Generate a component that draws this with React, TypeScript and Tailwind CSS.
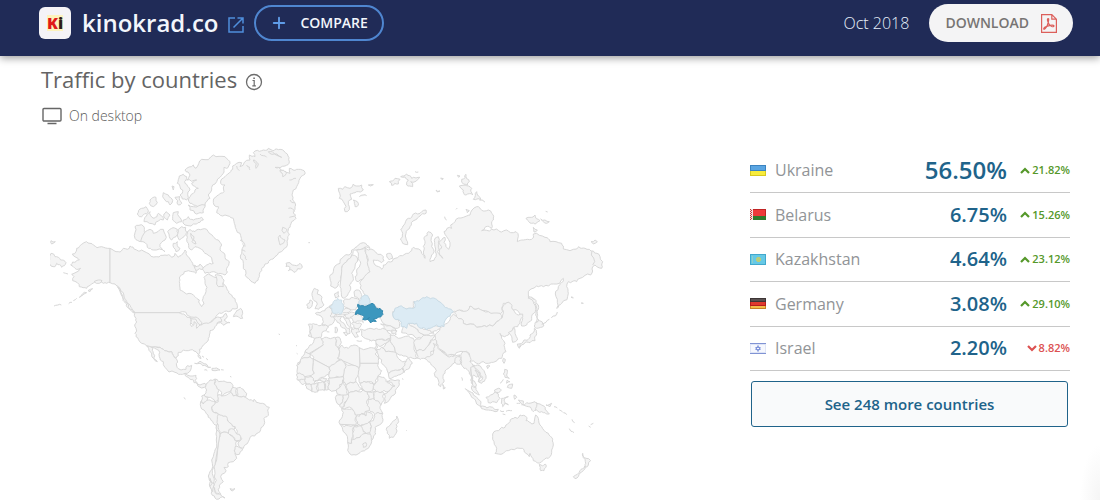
import { Plus } from "lucide-react";

type Point = [number, number];

type Region = {
  name: string;
  origin: Point;
  shapes: string[];
};

const regions: Region[] = [
  {
    name: "Canada and Alaska",
    origin: [120, 420],
    shapes: [
      "210 325 185 320 160 315 140 305 125 313 110 325 108 335 97 342 108 352 118 360 98 366 92 375 105 385 122 385 108 397 95 403 102 410 98 422 112 428 118 440 140 445 155 432 165 425 175 425 190 430 210 428",
      "210 325 235 335 250 325 262 328 270 318 285 328 305 330 320 338 350 350 375 345 395 352 405 340 415 352 430 340 435 330 445 350 455 365 470 380 468 400 445 392 425 405 418 425 420 450 440 462 465 470 478 480 485 500 492 492 490 470 498 455 495 430 492 412 505 402 520 410 540 415 550 430 562 450 575 465 590 490 592 505 565 515 545 520 525 535 512 548 538 533 558 520 562 530 552 540 570 548 552 556 542 548 528 552 510 565 482 570 462 560 452 530 417 518 285 518 275 505 262 490 252 468 240 445 225 432 210 428",
      "285 518 270 508 260 492 250 475 240 455 232 440 245 462 258 485",
      "590 512 602 505 608 520 608 535 595 530 580 530",
      "435 90 460 75 468 85 485 58 520 45 555 50 570 70 560 85 552 82 550 100 530 125 515 150 505 165 510 175 495 195 480 210 460 195 445 180 460 160 475 145 455 130 470 120 440 120 450 105",
      "412 130 418 108 430 103 440 110 435 130 450 150 440 180 420 165 428 150",
      "495 195 490 218 470 222 450 210 445 195 460 200",
      "430 240 445 230 460 240 485 232 490 240 470 252 435 255",
      "405 172 420 170 425 190 415 195",
      "370 158 385 165 398 182 390 195 375 180",
      "330 180 348 172 352 188 340 200 328 190",
      "292 222 305 205 318 200 325 212 310 225 298 230",
      "315 232 330 215 342 235 355 220 370 240 345 255 312 245",
      "378 215 390 225 382 240 372 232",
      "400 218 415 215 425 245 410 250 398 240",
      "285 260 310 258 316 280 300 305 285 295",
      "316 275 330 268 340 280 370 268 375 300 360 320 375 335 340 330 322 322 315 308 302 305",
      "383 275 395 265 412 268 408 290 395 300 388 290",
      "415 268 437 262 432 290 418 300 412 285",
      "400 310 412 305 420 325 408 335",
      "440 285 450 268 465 275 475 268 500 268 520 290 535 300 545 315 540 330 555 345 568 365 560 385 555 405 540 400 520 395 495 400 482 385 500 375 520 370 512 350 495 340 480 325 465 320 455 330 445 310",
      "452 280 462 290 456 305 468 312",
      "525 405 545 408 552 420 550 440 535 440 530 425",
      "462 378 480 372 488 388 470 392",
      "396 138 402 140 400 150",
      "33 340 45 350 55 352 62 360 78 368 65 382 50 370 45 380 33 378",
      "33 302 46 305 35 312",
      "70 398 84 402",
      "158 446 150 455 144 452",
      "140 458 125 468 118 472",
      "110 475 100 482",
      "96 487 86 491",
      "64 495 42 498",
      "162 425 175 420 186 422 178 430",
    ],
  },
  {
    name: "North Atlantic",
    origin: [600, 420],
    shapes: [
      "40 180 55 165 72 155 75 135 62 130 75 110 92 95 98 78 125 68 120 80 150 60 148 45 165 50 160 38 185 32 205 25 222 32 240 28 262 42 268 65 255 78 225 82 245 90 270 100 268 85 290 88 312 92 315 102 300 115 290 140 280 150 278 180 285 200 280 215 288 235 275 245 265 265 268 285 262 310 250 330 225 350 210 360 195 372 185 385 178 410 165 430 150 420 138 400 130 370 125 340 128 310 120 280 105 255 100 235 75 225 50 218 55 200 42 195",
      "258 370 270 368 278 375 300 370 307 382 285 397 265 392 270 382 258 380",
      "415 145 428 148 435 140 450 145 460 132 470 138 485 135 490 150 470 155 450 162 455 178 445 185 442 215 435 215 430 185 418 175",
      "460 180 472 185 475 195 465 200",
      "505 135 520 134 512 138",
      "478 170 500 167",
      "390 415 400 395 420 370 430 350 455 330 475 315 490 308 510 325 490 325 470 330 455 345 440 365 425 395 425 420 415 435 405 445 392 438",
      "425 395 440 365 455 345 470 350 472 365 465 380 455 400 460 420 448 435 445 460 432 475 424 465 420 440",
      "470 330 485 328 495 322 500 345 503 375 510 395 498 415 475 425 465 410 470 390 482 370 475 350",
      "240 90 258 95 248 110",
      "268 120 288 115",
      "265 205 284 215",
      "270 180 284 188",
      "268 232 284 228",
      "240 285 255 300 240 315",
      "248 262 262 270 252 280",
      "120 300 135 320",
      "128 340 140 360",
      "124 330 136 334",
      "160 60 175 72 168 85",
      "140 75 150 90",
      "110 78 118 92",
      "180 42 200 52",
      "205 35 230 42 245 52",
      "325 308 330 308",
    ],
  },
  {
    name: "Russia",
    origin: [1140, 450],
    shapes: [
      "-45 292 -35 300 -20 300 10 320 12 332 5 338 -20 330 -15 345 5 358 10 345 25 335 45 325 75 312 95 302 100 292 125 310 135 325 132 300 135 280 132 262 145 245 158 255 155 290 160 310 150 335 168 320 165 290 165 265 175 260 185 290 172 305 188 325 178 300 185 270 195 262 198 290 206 298 200 260 192 245 215 235 212 225 225 215 250 202 270 195 290 170 305 180 325 180 335 190 340 210 335 235 318 230 305 242 335 238 360 245 380 240 392 248 408 245 412 275 430 270 455 268 460 252 495 262 510 275 545 280 550 297 590 297 597 290 615 295 640 303 660 320 668 335 665 355 645 345 638 350 632 375 600 385 590 395 572 398 565 395 560 410 565 430 545 460 530 475 528 440 535 410 550 385 520 402 490 410 470 408 445 435 445 445 460 445 465 465 462 490 455 510 440 525 425 528 428 505 425 495 400 480 385 457 370 460 368 485 360 495 325 485 295 475 270 468 265 480 238 480 218 488 205 480 185 465 170 450 140 442 100 455 105 475 85 475 55 470 38 485 40 500 55 510 60 530 45 535 10 520 0 505 8 485 -15 470 -35 462 -32 445 -45 435 -55 420 -60 395 -30 365 -37 345 -40 315",
      "62 270 68 250 62 240 72 225 85 205 100 192 125 185 138 180 138 190 120 198 105 210 90 230 78 250 78 265 83 284 68 280",
      "245 88 258 73 268 95 262 105 250 102",
      "238 108 255 105 275 115 278 135 258 135 250 120",
      "280 148 290 125 302 150",
      "28 95 45 85 60 88 55 102 35 106",
      "62 80 80 72 95 85 120 82 105 95 92 95 98 110 80 105 85 90",
      "105 65 115 66",
      "182 84 190 86 186 89",
      "168 120 180 123 172 126",
      "232 76 240 78 236 82",
      "438 205 450 202 465 195 480 212 465 222 447 215",
      "482 207 495 210 508 215 500 220",
      "460 232 472 240 462 246",
      "497 184 503 186",
      "633 275 645 270 652 275 640 282",
      "20 312 32 310 38 325 28 330",
      "228 178 232 174",
      "258 178 268 182 262 188",
      "194 200 200 210",
      "298 150 315 156",
      "573 442 580 444",
      "603 459 610 460",
      "636 303 638 345",
    ],
  },
  {
    name: "Americas",
    origin: [300, 930],
    shapes: [
      "105 8 237 8 255 15 270 22 275 50 282 35 290 55 300 45 325 40 340 30 358 22 365 35 345 50 330 62 328 75 322 95 310 105 298 118 303 146 297 143 288 125 265 122 250 120 235 127 228 145 215 125 200 123 180 112 140 108 125 100 115 88 105 70 108 55 104 45 108 25 100 5",
      "270 25 282 22 300 32 305 45 296 42 288 28",
      "140 108 155 112 180 112 200 123 215 125 228 145 230 168 243 180 258 178 262 167 275 166 272 180 262 190 255 190 248 193 225 187 195 172 190 155 178 140 170 118 155 112 160 130 172 155 160 145 150 125",
      "255 190 270 198 288 196 285 212 292 222 300 225 315 220 320 228 305 234 292 222 278 208 260 200",
      "284 160 300 154 318 162 332 172 318 168 300 160",
      "336 175 350 174 360 180 348 182 336 181",
      "313 180 322 182",
      "363 179 371 180",
      "306 138 312 142",
      "318 145 324 150",
      "318 225 330 210 345 207 343 220 360 235 353 250 355 272 345 275 325 262 312 255 320 240",
      "345 207 355 215 372 213 390 217 398 232 390 245 375 250 365 258 358 240 343 222",
      "398 232 410 235 408 250 412 258 400 258 392 246",
      "410 235 430 238 440 250 436 262 412 258",
      "365 258 380 255 392 247 400 258 412 258 436 262 445 268 460 275 462 268 480 280 495 283 508 292 505 310 492 325 488 350 475 368 450 382 445 395 430 415 415 405 425 385 410 370 405 350 385 335 375 320 355 312 340 308 335 295 340 285 355 275 353 255",
      "305 258 312 255 325 262 322 272 310 282 303 275",
      "302 275 310 282 325 270 345 275 335 290 338 305 355 312 352 345 340 340 325 322 312 300 302 290",
      "355 312 375 318 385 335 405 350 403 358 388 358 385 370 360 372 355 345",
      "388 358 402 358 410 372 422 380 418 392 405 392 400 380 385 370",
      "408 408 428 420 418 433 405 430",
      "360 372 385 370 405 392 418 392 405 412 405 432 410 445 400 455 385 458 385 470 372 472 378 482 372 490 362 500 370 515 358 525 355 538 362 558 348 550 340 530 345 490 350 450 355 400",
      "350 345 360 372 352 420 345 465 340 500 338 530 350 552 375 564 350 568 334 550 328 525 327 505 335 480 340 440 345 420 350 380",
      "330 505 336 520 330 530 338 545",
      "390 536 405 536 398 543",
      "252 262 256 268",
      "390 199 394 201",
      "536 72 540 74",
      "588 106 591 108",
    ],
  },
  {
    name: "Europe and Africa",
    origin: [840, 840],
    shapes: [
      "96 40 103 25 115 30 112 42 120 45 125 62 132 75 125 82 105 86 112 72 102 62 98 52",
      "80 75 90 60 98 66 95 80 82 84",
      "190 62 205 58 225 55 238 60 238 75 228 90 205 85 190 78",
      "106 100 120 98 135 92 150 82 160 100 165 110 162 125 145 140 125 132 128 115 116 105",
      "148 78 158 72 155 88 150 84",
      "85 133 105 133 125 135 145 142 128 155 125 168 112 176 97 172 85 168 90 150",
      "97 136 95 172",
      "160 110 172 106 185 108 180 118 195 135 208 145 210 160 203 162 198 150 182 138 170 122",
      "160 110 150 108 155 98 168 103",
      "165 103 180 103 195 103 188 110 172 110",
      "185 92 195 85 212 92 200 98",
      "195 103 210 98 227 100 215 112 200 114",
      "190 112 205 115 212 130 218 145 200 130",
      "210 112 227 102 240 103 250 115 250 128 225 128",
      "215 130 232 130 245 132 240 142 222 144",
      "215 147 235 145 240 155 228 158 235 170 225 172 216 158",
      "222 35 235 30 242 38 245 50 238 58 224 50",
      "163 42 175 35 177 50 167 54",
      "190 158 203 160 198 168",
      "165 142 170 142 170 158 165 158",
      "230 182 246 183",
      "268 183 277 180",
      "140 155 148 156",
      "240 148 250 150 270 145 295 148 320 150 332 162 330 175 300 178 285 182 265 178 250 172 245 160",
      "302 132 320 138 345 145 350 155 330 152 315 146",
      "335 150 350 152 348 165 335 160",
      "288 180 305 178 328 174 318 190 300 200 290 192",
      "288 190 294 200 290 212 284 205",
      "318 190 330 174 335 190 345 210 350 218 335 215 305 202",
      "330 165 342 165 355 175 385 168 400 175 405 190 402 208 410 235 385 235 365 225 345 210 335 190",
      "290 210 305 202 335 215 350 220 360 240 378 245 375 258 355 270 335 275 325 280 310 255 295 225",
      "378 245 385 235 397 250 388 265 372 278 368 262",
      "325 280 340 272 365 266 370 278 350 288 328 296",
      "365 158 368 145 385 130 400 140 415 155 435 168 425 175 400 165 385 165",
      "385 130 410 130 430 148 450 152 462 160 440 165 415 155 400 140",
      "440 148 470 138 488 142 470 152 455 158",
      "405 180 425 172 440 166 465 165 450 185 442 200 428 212 408 212 403 195",
      "408 214 428 212 442 200 452 180 470 178 468 195 452 215 445 240 430 235 412 235",
      "75 215 90 195 102 180 125 175 130 195 85 222",
      "52 250 65 232 75 215 90 222 88 234 68 236",
      "52 280 50 255 66 235 90 230 100 237 103 280 65 285",
      "90 222 130 195 125 177 145 174 168 174 168 190 177 208 173 235 180 240 147 262 100 237",
      "166 175 178 172 182 192 177 208 168 190",
      "177 208 185 195 205 205 222 195 238 203 240 258 235 262 190 243 173 235",
      "238 203 265 205 285 205 292 215 285 222 295 250 240 250",
      "240 258 240 250 295 250 305 272 293 290 285 312 265 305 240 310 232 285",
      "195 248 235 262 232 290 228 305 198 316 190 290",
      "147 264 180 240 195 250 190 288 150 295",
      "100 237 147 262 147 282 118 295 105 305 90 290 103 280",
      "50 282 65 283 75 298 52 300",
      "55 300 75 298 80 310 68 315",
      "75 290 90 290 105 305 95 315 82 312",
      "75 315 90 312 95 333 80 325",
      "95 312 112 308 114 335 95 335",
      "114 308 128 305 133 332 114 332",
      "105 303 125 292 140 296 132 306",
      "133 306 145 300 145 328 136 330",
      "145 295 190 290 188 308 178 325 165 332 145 328",
      "168 330 180 322 190 300 196 318 205 345 172 342",
      "198 316 228 305 250 328 235 335 205 340",
      "240 310 265 305 282 316 278 332 262 335 250 328",
      "285 312 295 288 312 292 322 308 345 318 325 335 300 338 280 328",
      "320 304 345 302 358 300 350 325 335 348 313 370 313 342 325 335 345 318",
      "282 334 300 338 313 340 312 362 303 375 282 355",
      "262 336 280 334 282 355 264 358",
      "205 340 235 335 262 336 264 358 260 370 268 392 255 395 258 408 245 400 225 403 215 385 185 385 195 370 202 355",
      "170 345 190 345 188 365 178 375 168 362",
      "190 345 205 342 202 358 192 378 182 382 180 373 188 365",
      "264 358 282 357 303 375 300 385 308 400 285 405 268 392",
      "185 385 215 387 225 403 230 408 228 435 180 433 187 410",
      "228 410 245 402 258 408 258 395 275 400 275 418 252 435 232 432",
      "283 405 308 400 308 425 285 442 287 462 272 485 270 462 274 440 268 425 280 422",
      "240 437 255 432 268 425 274 440 268 458 252 455",
      "180 433 205 437 235 436 220 442 218 470 215 490 203 488 190 455",
      "220 442 240 437 250 455 258 462 240 472 218 478",
      "203 488 215 490 218 478 240 472 258 460 270 462 275 485 258 508 240 518 215 525 207 518",
      "248 492 258 488 258 500 250 502",
      "325 440 335 428 345 420 350 408 356 425 348 445 340 472 328 475 322 460",
      "366 296 370 298",
      "378 450 380 452",
      "50 220 53 222",
    ],
  },
  {
    name: "Asia and Oceania",
    origin: [1260, 870],
    shapes: [
      "15 205 28 200 42 180 40 160 55 170 65 185 85 195 105 198 120 195 112 215 105 215 90 230 75 250 72 270 62 290 55 285 45 260 38 228 25 215",
      "68 283 76 294 70 297",
      "105 205 120 200 122 222 110 222",
      "60 180 85 190 102 195 100 200 78 195",
      "103 68 118 60 145 60 150 48 175 55 205 65 240 70 245 85 230 95 200 110 170 112 130 100 110 80",
      "45 135 60 115 82 100 90 90 100 72 110 80 130 100 170 112 200 110 230 95 248 75 248 50 265 37 280 60 295 75 308 72 300 100 280 112 268 130 248 138 240 130 245 145 255 160 258 185 245 205 225 215 205 220 190 215 170 220 150 215 148 190 130 185 105 195 65 180 50 160",
      "200 228 210 228 203 236",
      "250 205 256 208 252 220",
      "265 128 282 112 285 130 292 150 278 157 275 140",
      "345 98 358 92 372 105 350 115 343 108",
      "343 115 350 130 345 152 330 158 312 162 300 172 294 165 312 150 328 145 338 130",
      "292 162 302 165 298 175",
      "325 20 345 28 355 45 352 70 357 90 350 98 347 75 350 55 345 40",
      "365 103 388 88",
      "394 84 412 66",
      "122 198 130 185 145 190 150 215 160 228 152 240 158 265 160 285 152 270 148 245 132 235 125 215",
      "152 232 165 230 182 250 170 262 160 255 156 272 168 290 158 285",
      "160 225 172 225 195 250 198 265 185 280 175 275 188 262 178 245",
      "165 240 185 262 175 275",
      "156 287 168 292 178 315 168 310",
      "136 296 150 305 165 318 183 335 183 350 170 342 155 322",
      "182 350 200 354 235 358 232 364 205 360 185 356",
      "240 362 252 364",
      "258 364 276 362",
      "248 372 256 374",
      "198 322 212 315 225 305 235 312 240 325 230 338 205 338",
      "222 302 235 295 244 300 235 308",
      "245 325 265 320 252 330 265 345 254 340 248 350 244 340",
      "254 238 262 240 260 255 268 265 255 262 250 252",
      "262 270 270 275 260 280",
      "265 285 278 282 275 295 262 292",
      "240 280 250 268",
      "282 315 290 322 284 328",
      "290 340 300 340",
      "295 330 310 333 305 345 320 338 345 335 365 345 375 358 388 372 370 368 350 360 340 365 325 350 305 342",
      "347 336 347 362",
      "378 345 395 340 390 350",
      "402 350 412 354",
      "418 360 428 366",
      "430 368 440 374",
      "456 388 464 398",
      "448 416 462 428",
      "506 408 512 412",
      "512 404 520 400",
      "222 425 245 412 255 412 270 395 285 382 292 385 300 375 320 382 318 392 335 402 342 400 347 375 355 385 365 410 385 430 398 448 400 465 395 480 385 505 365 515 340 512 330 490 328 500 318 490 300 475 265 482 250 490 235 492 225 490 228 470 218 440",
      "358 523 368 528 377 523 372 542 362 542",
      "488 490 498 505 512 512 505 525 496 532 496 515",
      "494 528 490 542 475 560 465 566 460 560 480 542",
      "125 262 127 272",
      "454 20 460 23",
      "484 39 490 40",
    ],
  },
];

const kazakhstan =
  "338 100 345 85 365 78 385 85 405 82 402 65 420 60 440 50 452 56 470 58 490 75 505 86 520 95 510 108 495 122 492 140 470 135 450 145 440 150 425 145 410 130 385 130 380 145 365 140 355 118 342 115";
const belarus = "236 72 243 58 255 45 267 55 270 70 255 74";
const germany =
  "160 65 165 60 170 62 172 55 185 60 190 75 188 92 180 103 160 100 155 85 150 80 158 72";
const ukraine =
  "233 73 250 77 268 74 276 70 284 76 290 85 308 92 309 103 295 112 280 118 289 124 272 129 262 118 268 112 255 120 248 118 253 110 240 103 226 104 228 94 236 85";

// Adds a shifted midpoint to each medium-length edge; borders that two shapes share move alike.
function roughen(points: Point[], closed: boolean): Point[] {
  const result: Point[] = [];
  points.forEach(([x1, y1], i) => {
    result.push([x1, y1]);
    if (!closed && i === points.length - 1) return;
    const [x2, y2] = points[(i + 1) % points.length];
    const length = Math.hypot(x2 - x1, y2 - y1);
    if (length > 9 && length < 45) {
      const seed = Math.sin((x1 + x2) * 12.9 + (y1 + y2) * 78.2) * 43758.5;
      const shift = (seed - Math.floor(seed) - 0.5) * 0.45;
      const flip = x1 + y1 > x2 + y2 ? -1 : 1;
      result.push([
        Math.round((x1 + x2) / 2 - (y2 - y1) * shift * flip),
        Math.round((y1 + y2) / 2 + (x2 - x1) * shift * flip),
      ]);
    }
  });
  return result;
}

function outline(shape: string): string {
  const numbers = shape.split(" ").map(Number);
  const points: Point[] = [];
  for (let i = 0; i + 1 < numbers.length; i += 2) {
    points.push([numbers[i], numbers[i + 1]]);
  }
  const closed = points.length > 2;
  const path = roughen(roughen(points, closed), closed)
    .map(([x, y], i) => `${i === 0 ? "M" : "L"}${x} ${y}`)
    .join("");
  return closed ? path + "Z" : path;
}

function WorldMap() {
  return (
    <svg
      viewBox="150 420 1668 1080"
      className="block h-auto w-full"
      role="img"
      aria-label="World map of traffic by country"
      strokeLinejoin="round"
    >
      <g fill="#f4f4f4" stroke="#d8d8d8" strokeWidth="3">
        {regions.map((region) => (
          <g key={region.name} transform={`translate(${region.origin[0]} ${region.origin[1]})`}>
            {region.shapes.map((shape) => (
              <path key={shape} d={outline(shape)} />
            ))}
          </g>
        ))}
      </g>
      <g transform="translate(840 840)" strokeWidth="3">
        <path d={outline(kazakhstan)} fill="#dcebf4" stroke="#c9dbe5" />
        <path d={outline(belarus)} fill="#d8eaf4" stroke="#cbdde7" />
        <path d={outline(germany)} fill="#dcebf4" stroke="#cfdfe8" />
        <path d={outline(ukraine)} fill="#3c97be" stroke="#3489af" />
      </g>
    </svg>
  );
}

function Flag({ country }: { country: string }) {
  return (
    <svg viewBox="0 0 16 11" className="h-[11px] w-4" aria-hidden="true" shapeRendering="crispEdges">
      {country === "Ukraine" && (
        <>
          <rect width="16" height="11" fill="#3b83c0" />
          <rect x="1" y="1" width="14" height="4" fill="#5aa5e2" />
          <rect y="6" width="16" height="5" fill="#d8c91e" />
          <rect x="1" y="6" width="14" height="4" fill="#f8ec3c" />
        </>
      )}
      {country === "Belarus" && (
        <>
          <rect width="16" height="11" fill="#c02424" />
          <rect x="3" y="1" width="12" height="6" fill="#ee3a3a" />
          <rect x="3" y="7" width="13" height="4" fill="#2f7a2c" />
          <rect width="3" height="11" fill="#f3dede" />
          <path d="M0 0h1v1H0zM1 1h1v1H1zM0 2h1v1H0zM1 3h1v1H1zM0 4h1v1H0zM1 5h1v1H1zM0 6h1v1H0zM1 7h1v1H1zM0 8h1v1H0zM1 9h1v1H1zM0 10h1v1H0z" fill="#c53a3a" />
        </>
      )}
      {country === "Kazakhstan" && (
        <>
          <rect width="16" height="11" fill="#42a8cc" />
          <rect x="1" y="1" width="14" height="9" fill="#66c9e6" />
          <path d="M7 3h3v1h1v3h-1v1H7V7H6V4h1z" fill="#b9cd7c" />
          <path d="M2 2h1v7H2z" fill="#8fcfca" />
        </>
      )}
      {country === "Germany" && (
        <>
          <rect width="16" height="11" fill="#3d3535" />
          <rect x="1" y="1" width="14" height="2" fill="#5a5151" />
          <rect y="4" width="16" height="4" fill="#b81d1d" />
          <rect x="1" y="4" width="14" height="3" fill="#e03a2e" />
          <rect y="8" width="16" height="3" fill="#c98224" />
          <rect x="1" y="8" width="14" height="2" fill="#f4bd4a" />
        </>
      )}
      {country === "Israel" && (
        <>
          <rect width="16" height="11" fill="#dfe5f6" />
          <rect x="1" y="2" width="14" height="7" fill="#f6f8fe" />
          <path d="M0 0h16v1H0zM0 10h16v1H0z" fill="#8093d4" />
          <path
            d="M8 2.5l2.3 4H5.7zM8 8.5L5.7 4.500h4.600z"
            fill="none"
            stroke="#6f86d6"
            strokeWidth="0.8"
            shapeRendering="auto"
          />
        </>
      )}
    </svg>
  );
}

function TrendArrow({ up }: { up: boolean }) {
  return (
    <svg
      viewBox="0 0 10 7"
      className="h-[7px] w-2.5"
      fill="none"
      stroke="currentColor"
      strokeWidth="2.2"
      role="img"
      aria-label={up ? "up" : "down"}
    >
      <path d={up ? "M1 6l4-4 4 4" : "M1 1l4 4 4-4"} />
    </svg>
  );
}

const rows = [
  { country: "Ukraine", share: "56.50%", change: "21.82%", up: true, lead: true },
  { country: "Belarus", share: "6.75%", change: "15.26%", up: true, lead: false },
  { country: "Kazakhstan", share: "4.64%", change: "23.12%", up: true, lead: false },
  { country: "Germany", share: "3.08%", change: "29.10%", up: true, lead: false },
  { country: "Israel", share: "2.20%", change: "8.82%", up: false, lead: false },
];

function CountryTable() {
  return (
    <table className="h-[223px] w-full border-collapse">
      <tbody>
        {rows.map((row) => (
          <tr key={row.country} className="h-11 border-b border-[#c8c8c8]">
            <th scope="row" className="p-0 text-left text-base font-normal text-[#919497]">
              <span className="flex items-center gap-[9px]">
                <Flag country={row.country} />
                {row.country}
              </span>
            </th>
            <td
              className={
                row.lead
                  ? "p-0 text-right text-2xl font-semibold text-[#20638a]"
                  : "p-0 text-right text-xl font-semibold text-[#20638a]"
              }
            >
              {row.share}
            </td>
            <td
              className={
                row.up
                  ? "w-[63px] p-0 text-[11px] font-semibold text-[#55982a]"
                  : "w-[63px] p-0 text-[11px] font-semibold text-[#dc5151]"
              }
            >
              <span className="flex items-center justify-end gap-0.5">
                <TrendArrow up={row.up} />
                {row.change}
              </span>
            </td>
          </tr>
        ))}
      </tbody>
    </table>
  );
}

function Header() {
  return (
    <header className="relative flex h-14 items-start justify-between bg-[#202b57] pr-[27px] pl-[39px] shadow-[0_2px_8px_rgba(0,0,0,0.4)]">
      <div className="flex h-[46px] items-center">
        <span className="flex size-8 items-center justify-center rounded-md bg-[#f4f3f7]" aria-hidden="true">
          <span className="bg-[#fdf3bd] text-base leading-4 font-extrabold">
            <span className="text-[#e01818]">K</span>
            <span className="text-[#2b1a14]">i</span>
          </span>
        </span>
        <h1 className="ml-[11px] text-2xl font-semibold text-[#f3f6fc]">kinokrad.co</h1>
        <a href="#site" aria-label="Open site" className="ml-2.5 text-[#4f8fdc]">
          <svg viewBox="0 0 16 16" className="mt-1 size-4" fill="none" stroke="currentColor" strokeWidth="1.5">
            <path d="M7 1H1v14h14V9M9.5 1H15v5.5M15 1L5.5 10.5" />
          </svg>
        </a>
        <button
          type="button"
          className="ml-2.5 flex h-9 items-center gap-3 rounded-full border-2 border-[#4f86d0] px-3.5 text-sm font-semibold text-[#f3f6fc]"
        >
          <Plus className="size-[18px] text-[#5f9ce8]" strokeWidth={2.5} aria-hidden="true" />
          COMPARE
        </button>
      </div>
      <div className="flex h-[46px] items-center gap-5">
        <span className="text-base font-light text-[#e6f0fb]">Oct 2018</span>
        <button
          type="button"
          className="flex h-[38px] items-center gap-3 rounded-full bg-[#f4f4f5] px-4 text-sm font-semibold text-[#777473]"
        >
          DOWNLOAD
          <svg
            viewBox="0 0 16 19"
            className="h-[19px] w-4"
            fill="none"
            stroke="#dc5f5b"
            strokeWidth="1.2"
            aria-hidden="true"
          >
            <path d="M.6.6h10.2l4.6 4.6v13.2H.6zM10.8.6v4.6h4.6" />
            <path d="M7.3 4.5c-1 0-1 1.200-.6 2.700.6 2.400 2 4.500 4 5.300 1.200.4 2.300.3 2.300-.4 0-1.400-3.300-.9-5.500-.3-2 .5-4.800 1.600-4.800 2.900 0 1 1.400.6 2.600-1.400C6.700 11.100 8.500 4.500 7.300 4.500z" />
          </svg>
        </button>
      </div>
    </header>
  );
}

export default function App() {
  return (
    <div className="relative min-h-screen bg-white font-['Open_Sans','Noto_Sans',sans-serif]">
      <Header />
      <main className="pr-[30px] pl-[41px]">
        <div className="flex items-center gap-2 pt-[7px]">
          <h2 className="text-[22px] leading-8 text-[#646464]">Traffic by countries</h2>
          <svg
            viewBox="0 0 18 18"
            className="mt-1.5 size-[18px]"
            fill="none"
            stroke="#6c6c6c"
            role="img"
            aria-label="About this chart"
          >
            <circle cx="9" cy="9" r="7.5" strokeWidth="1.3" />
            <path d="M7.5 7.5H9.2v5M7.3 12.8h3.6" strokeWidth="1.2" />
            <path d="M8.3 5.2h1.6" strokeWidth="1.6" />
          </svg>
        </div>
        <p className="mt-[9px] flex h-6 items-center gap-[7px] text-sm text-[#5c5c5c]">
          <svg viewBox="0 0 21 18" className="h-[18px] w-[21px]" fill="none" stroke="#666" aria-hidden="true">
            <rect x="2" y="1.5" width="18" height="12.5" rx="1" strokeWidth="1.4" />
            <path d="M6.5 16.5h9" strokeWidth="1.5" />
          </svg>
          <span className="font-light">On desktop</span>
        </p>
        <div className="flex justify-between">
          <div className="mt-3 ml-[9px] max-w-[556px] flex-1">
            <WorldMap />
          </div>
          <section className="mt-5 w-80 shrink-0">
            <CountryTable />
            <button
              type="button"
              className="mt-2.5 ml-px h-[46px] w-[317px] rounded-[3px] border border-[#20638a] bg-[#f9fafb] text-[15px] font-semibold text-[#20638a]"
            >
              See 248 more countries
            </button>
          </section>
        </div>
      </main>
      <div className="pointer-events-none absolute right-0 bottom-0 h-14 w-5 bg-radial-[at_100%_100%] from-[#f5f5f5] to-white to-70%" />
    </div>
  );
}
